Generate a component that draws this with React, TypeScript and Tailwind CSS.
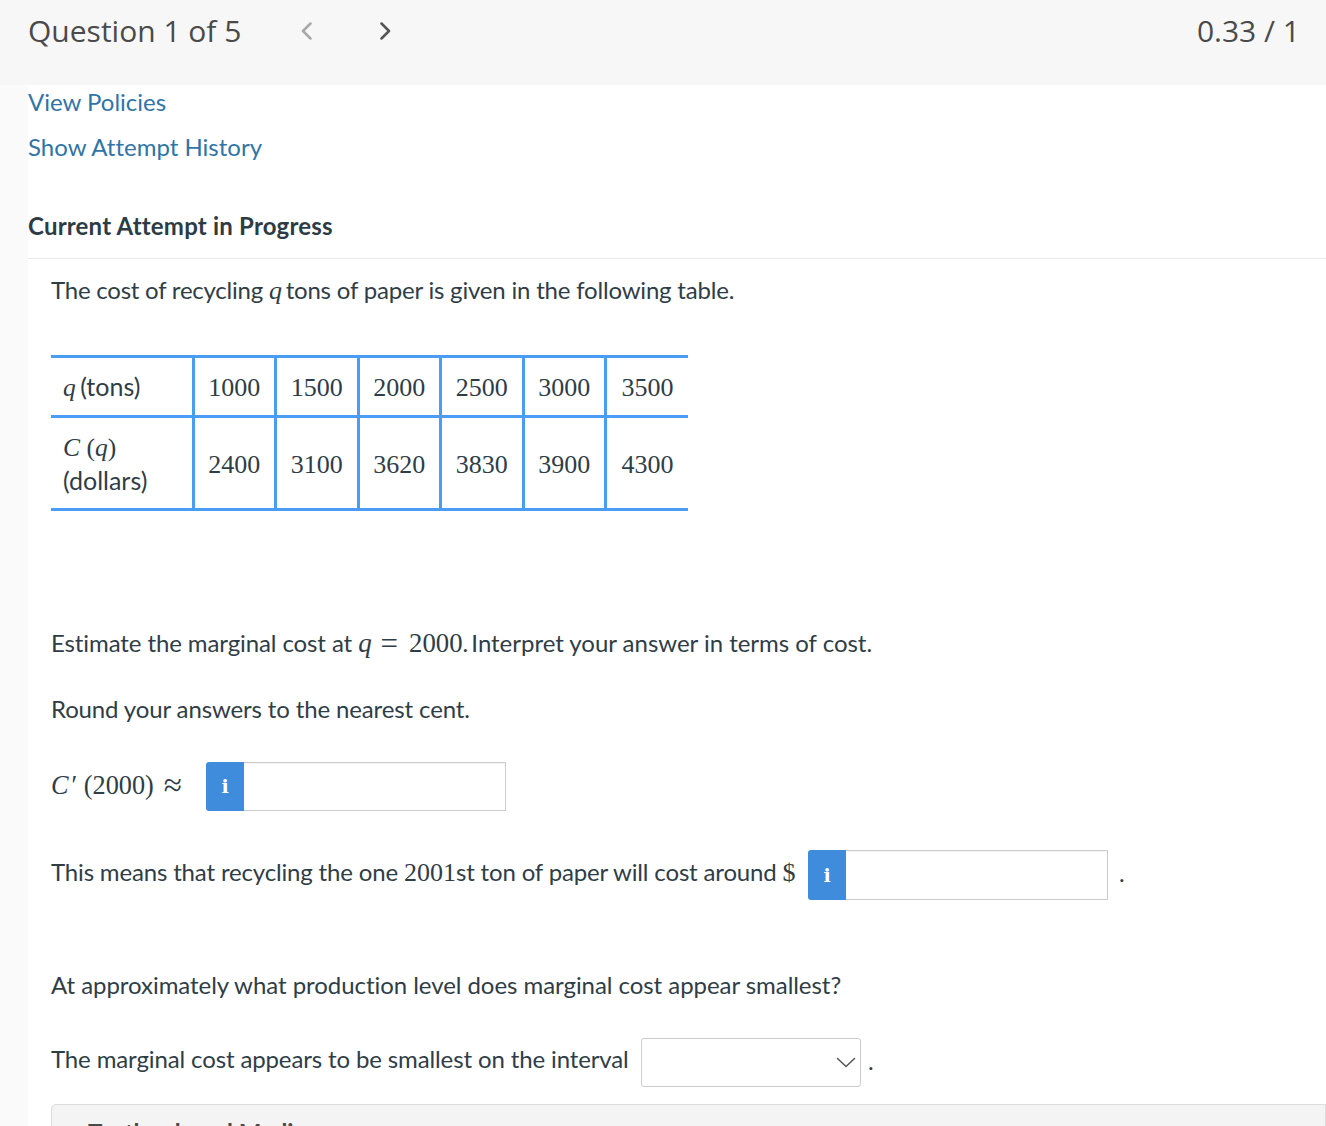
const math = "font-['Liberation_Serif',serif]";
const rowOne = ["1000", "1500", "2000", "2500", "3000", "3500"];
const rowTwo = ["2400", "3100", "3620", "3830", "3900", "4300"];

function InfoInput({ width, height }: { width: string; height: string }) {
  return (
    <div className={`flex ${width} ${height}`}>
      <div className="flex w-[38px] shrink-0 items-center justify-center rounded-l-[3px] bg-[#3f8bdc] font-['DejaVu_Serif',serif] text-[19px] font-bold text-white">i</div>
      <div className="flex-1 border border-l-0 border-[#cccccc] bg-white shadow-[inset_0_1px_1px_rgba(0,0,0,0.05)]" />
    </div>
  );
}

export default function App() {
  return (
    <div className="h-[1126px] overflow-hidden bg-[#fafafa] font-['Lato',sans-serif] text-[24px] text-[#2f3d47] [font-variant-ligatures:none]">
      {/* Header */}
      <div className="flex h-[85px] items-start bg-[#f7f7f7] pl-[28px] pr-[26px] pt-[10px] font-['Open_Sans',sans-serif] text-[30px] leading-[42px] text-[#4a4a4a]">
        <span>Question 1 of 5</span>
        <svg className="ml-[60px] mt-[12px] h-[18px] w-[11px] text-[#a8a8a8]" viewBox="0 0 11 18" fill="none" stroke="currentColor" strokeWidth="2.5" strokeLinecap="round" strokeLinejoin="round">
          <path d="M9.5 1.5 2 9l7.5 7.5" />
        </svg>
        <svg className="ml-[68px] mt-[12px] h-[18px] w-[11px] text-[#555555]" viewBox="0 0 11 18" fill="none" stroke="currentColor" strokeWidth="2.5" strokeLinecap="round" strokeLinejoin="round">
          <path d="M1.5 1.5 9 9l-7.5 7.5" />
        </svg>
        <span className="ml-auto">0.33 / 1</span>
      </div>

      <div className="ml-[28px] h-[1041px] bg-white">
        <div className="text-[#2f74a8]">
          <div className="h-[45px] leading-[34px]">View Policies</div>
          <div className="h-[45px] leading-[34px]">Show Attempt History</div>
        </div>
        <div className="mt-[31px] h-[53px] border-b border-[#e8e8e8] pt-[3px] font-bold leading-[34px] tracking-[0.2px] text-[#2d3b45]">Current Attempt in Progress</div>

        <div className="pl-[23px]">
          <p className="mt-[14px] leading-[34px] tracking-[-0.23px]">
            The cost of recycling <i className={`text-[26px] ${math}`}>q</i>
            <span className="ml-[-2px] tracking-[-0.19px]"> tons of paper is given in the following table.</span>
          </p>

          {/* Data table */}
          <table className="mt-[47px] w-[637px] table-fixed border-collapse border-y-[3px] border-[#4b9cf5]">
            <colgroup>
              <col className="w-[142px]" />
              <col span={6} />
            </colgroup>
            <tbody>
              <tr className="h-[60px] border-b-[3px] border-[#4b9cf5]">
                <td className="pl-[12px] text-[25px] leading-[32px]">
                  <i className={`text-[25.5px] ${math}`}>q</i>
                  <span className="ml-[-2px]"> (tons)</span>
                </td>
                {rowOne.map((v) => (
                  <td key={v} className={`border-l-[3px] border-[#4b9cf5] pt-[2px] text-center text-[26px] ${math}`}>{v}</td>
                ))}
              </tr>
              <tr className="h-[93px]">
                <td className="pl-[12px] text-[25px] leading-[32px]">
                  <span className={`text-[25.5px] ${math}`}><i>C</i> (<i>q</i>)</span>
                  <br />
                  (dollars)
                </td>
                {rowTwo.map((v) => (
                  <td key={v} className={`border-l-[3px] border-[#4b9cf5] pt-[2px] text-center text-[26px] ${math}`}>{v}</td>
                ))}
              </tr>
            </tbody>
          </table>

          <p className="mt-[115px] leading-[34px] tracking-[-0.02px]">
            <span className="tracking-[-0.1px]">Estimate the marginal cost at </span>
            <i className={`text-[27px] ${math}`}>q</i>
            <span className={`ml-[9px] align-[-2px] text-[31px] leading-none tracking-normal ${math}`}>=</span>
            <span className={`ml-[11px] text-[26.75px] tracking-normal ${math}`}>2000</span>
            <span className="[word-spacing:-3px]">. Interpret</span> your answer in terms of cost.
          </p>
          <p className="mt-[32px] leading-[34px] tracking-[-0.13px]">Round your answers to the nearest cent.</p>

          <div className="mt-[36px] flex items-center">
            <span className={`w-[155px] -translate-y-px whitespace-nowrap text-[26.25px] ${math}`}>
              <i>C</i><span className="ml-[3px]">′</span> (2000)
              <span className="ml-[10px] align-[-2px] text-[33px] leading-none">≈</span>
            </span>
            <InfoInput width="w-[300px]" height="h-[49px]" />
          </div>

          <div className="mt-[39px] flex items-center">
            <span className="w-[757px] whitespace-nowrap pb-[6px] tracking-[-0.16px]">
              This means that recycling the one <span className={`text-[26px] tracking-normal ${math}`}>2001</span>st ton of paper will cost around <span className={`text-[26px] ${math}`}>$</span>
            </span>
            <InfoInput width="w-[300px]" height="h-[50px]" />
            <span className="ml-[11px] pb-[4px]">.</span>
          </div>

          <p className="mt-[68px] leading-[34px] tracking-[-0.05px]">At approximately what production level does marginal cost appear smallest?</p>

          <div className="mt-[36px] flex items-center">
            <span className="w-[590px] whitespace-nowrap pb-[8px] tracking-[-0.125px]">The marginal cost appears to be smallest on the interval</span>
            <div className="flex h-[49px] w-[220px] items-center justify-end rounded-[3px] border border-[#cccccc] bg-white pr-[4px]">
              <svg className="h-[11px] w-[20px] text-[#555555]" viewBox="0 0 20 11" fill="none" stroke="currentColor" strokeWidth="1.5" strokeLinecap="round" strokeLinejoin="round">
                <path d="M1.5 1.5 10 9.5l8.5-8" />
              </svg>
            </div>
            <span className="ml-[7px] pb-[4px]">.</span>
          </div>

          <div className="mt-[17px] h-[60px] rounded-tl-[5px] border border-[#dcdcdc] bg-[#f4f4f4] pl-[36px] pt-[11px] font-bold leading-[34px] text-[#4a4a4a]">
            Textbook and Media
          </div>
        </div>
      </div>
    </div>
  );
}
